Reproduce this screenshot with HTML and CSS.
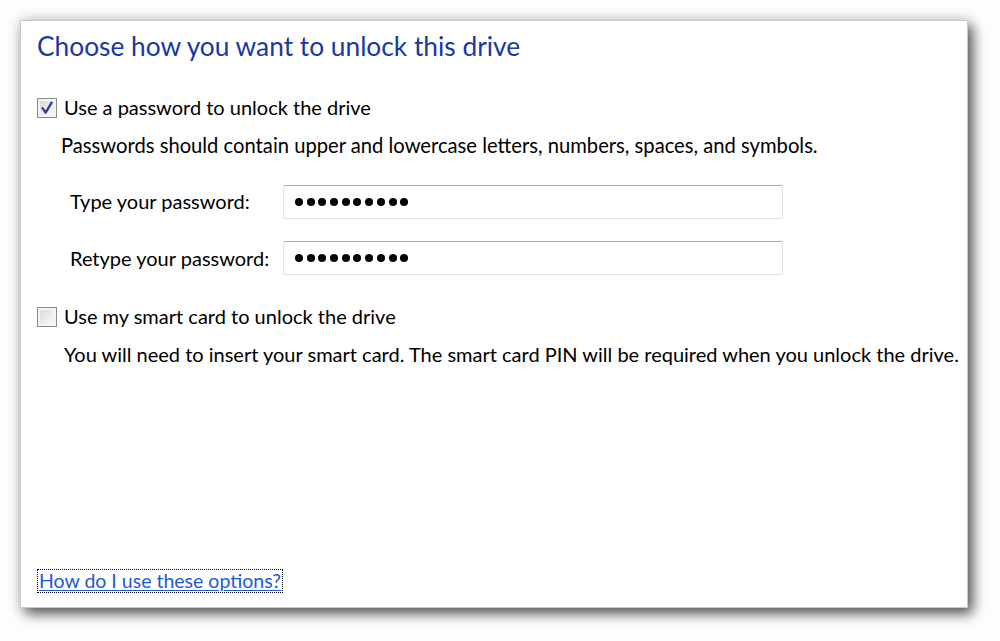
FILE: index.html
```html
<!DOCTYPE html>
<html lang="en">
<head>
<meta charset="utf-8">
<title>Choose how you want to unlock this drive</title>
<link rel="stylesheet" href="styles.css">
</head>
<body>
<div class="panel">
  <h1 class="title">Choose how you want to unlock this drive</h1>

  <div class="check-row first">
    <span class="checkbox checked">
      <svg viewBox="0 0 20 20" width="20" height="20"><path d="M5.5 10.2 L8.6 14.6 L14.6 4.6" fill="none" stroke="#2b3f92" stroke-width="2.3" stroke-linecap="round" stroke-linejoin="round"/></svg>
    </span>
    <span class="check-label">Use a password to unlock the drive</span>
  </div>
  <p class="desc desc-pw">Passwords should contain upper and lowercase letters, numbers, spaces, and symbols.</p>

  <div class="field-row type-row">
    <span class="field-label">Type your password:</span>
    <span class="input"><span class="dots"><i></i><i></i><i></i><i></i><i></i><i></i><i></i><i></i><i></i><i></i></span></span>
  </div>
  <div class="field-row retype-row">
    <span class="field-label retype-label">Retype your password:</span>
    <span class="input"><span class="dots"><i></i><i></i><i></i><i></i><i></i><i></i><i></i><i></i><i></i><i></i></span></span>
  </div>

  <div class="check-row second">
    <span class="checkbox"></span>
    <span class="check-label">Use my smart card to unlock the drive</span>
  </div>
  <p class="desc desc-card">You will need to insert your smart card. The smart card PIN will be required when you unlock the drive.</p>

  <div class="help"><a class="help-link" href="#">How do I use these options?</a></div>
</div>
</body>
</html>
```

FILE: styles.css
```css
html, body {
  margin: 0;
  padding: 0;
}
body {
  background: #fdfdfd;
  width: 1000px;
  height: 641px;
  overflow: hidden;
  font-family: Lato, "Open Sans", sans-serif;
}
.panel {
  margin: 20px 0 0 20px;
  width: 948px;
  height: 588px;
  box-sizing: border-box;
  background: #fff;
  border: 1px solid #c9c9c9;
  box-shadow: 5px 6px 12px rgba(0,0,0,0.62), 0 0 14px rgba(0,0,0,0.16);
  padding: 10px 0 14px 16px;
  display: flex;
  flex-direction: column;
  color: #000;
  font-size: 20px;
}
.title {
  margin: 0;
  font-size: 26.3px;
  line-height: 30px;
  height: 30px;
  font-weight: 400;
  color: #17399f;
  white-space: nowrap;
}
.check-row {
  display: flex;
  align-items: center;
  height: 22px;
  white-space: nowrap;
}
.check-row.first { margin-top: 36px; }
.check-row.second { margin-top: 31px; }
.checkbox {
  width: 20px;
  height: 20px;
  box-sizing: border-box;
  border: 1px solid #8a8a8a;
  background: linear-gradient(135deg, #d6d6d6 0%, #eeeeee 60%, #f8f8f8 100%);
  box-shadow: inset 0 0 0 2px #f4f4f4;
  position: relative;
  flex: none;
}
.checkbox svg {
  position: absolute;
  left: -1px;
  top: -1px;
}
.check-label {
  margin-left: 7px;
  line-height: 22px;
  padding-bottom: 3px;
}
.desc {
  margin: 0;
  line-height: 22px;
  height: 22px;
  white-space: nowrap;
}
.desc-pw { margin-top: 15px; padding-left: 24px; font-size: 20.2px; }
.desc-card { margin-top: 15px; padding-left: 27px; }
.field-row {
  display: flex;
  align-items: center;
  height: 34px;
  padding-left: 33px;
}
.type-row { margin-top: 29px; }
.retype-row { margin-top: 22px; }
.field-label {
  width: 213px;
  flex: none;
  line-height: 22px;
  white-space: nowrap;
  padding-bottom: 3px;
}
.retype-label { padding-bottom: 0; }
.input {
  width: 500px;
  height: 34px;
  box-sizing: border-box;
  border: 1px solid #dfe2e8;
  border-top-color: #a9abb2;
  border-radius: 2px;
  background: #fff;
  display: flex;
  align-items: center;
  padding-left: 11px;
}
.dots {
  display: flex;
  gap: 3.7px;
}
.dots i {
  display: block;
  width: 8px;
  height: 8px;
  border-radius: 50%;
  background: #000;
}
.help {
  margin-top: auto;
  display: flex;
}
.help-link {
  display: block;
  height: 24px;
  box-sizing: border-box;
  border: 1px dotted #000;
  padding: 0 1px;
  line-height: 22px;
  font-size: 19.5px;
  color: #1d5ad6;
  text-decoration: underline;
  text-underline-offset: 2px;
  white-space: nowrap;
}
```
